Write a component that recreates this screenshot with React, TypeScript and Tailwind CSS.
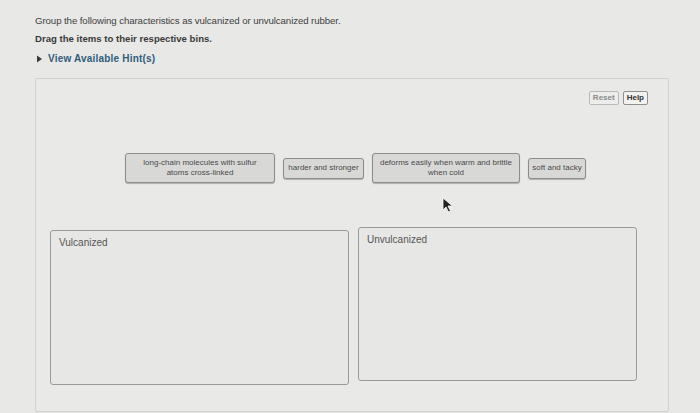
export default function App() {
  const items = [
    { text: "long-chain molecules with sulfur atoms cross-linked", w: "w-[150px]", h: "h-[30px]", px: "px-[12px]" },
    { text: "harder and stronger", w: "w-[81px]", h: "h-[21px]", px: "px-[2px]" },
    { text: "deforms easily when warm and brittle when cold", w: "w-[148px]", h: "h-[30px]", px: "px-[6px]" },
    { text: "soft and tacky", w: "w-[58px]", h: "h-[21px]", px: "px-[2px]" },
  ];

  return (
    <div className="relative w-[700px] h-[413px] overflow-hidden bg-[#e8e8e6] pl-[35px] pt-[15px] font-['Liberation_Sans',Arial,sans-serif] text-[#404040]">
      <p className="text-[9.7px] leading-[12px] tracking-[-0.1px]">
        Group the following characteristics as vulcanized or unvulcanized rubber.
      </p>
      <p className="mt-[6px] text-[9.6px] leading-[12px] font-bold text-[#3a3a3a]">Drag the items to their respective bins.</p>
      <div className="mt-[7px] flex items-center gap-[5px] text-[10px] leading-[13px] font-bold text-[#2f5d7c] tracking-[0.2px]">
        <svg width="7" height="8" viewBox="0 0 7 8" className="ml-[1px]">
          <path d="M1 0.5 L6 4 L1 7.5 Z" fill="#3a3a3a" />
        </svg>
        <span>View Available Hint(s)</span>
      </div>

      <div className="mt-[13px] w-[634px] h-[334px] border border-[#d2d2d0] rounded-[2px] bg-[#e9e9e7] pt-[12px]">
        <div className="flex justify-end gap-[4px] pr-[20px]">
          <button className="h-[14px] px-[3px] border border-[#b9b9b9] rounded-[2px] bg-[#ededeb] text-[8px] leading-[12px] font-bold text-[#8a8a8a]">
            Reset
          </button>
          <button className="h-[14px] px-[3px] border border-[#8f8f8f] rounded-[2px] bg-[#f2f2f0] text-[8px] leading-[12px] font-bold text-[#333]">
            Help
          </button>
        </div>

        <div className="mt-[48px] ml-[89px] flex items-center gap-[8px]">
          {items.map((it, i) => (
            <div
              key={i}
              className={`${it.w} ${it.h} ${it.px} flex items-center justify-center text-center text-[8px] leading-[10px] text-[#4a4a4a] bg-[#d8d8d7] border border-[#8c8c8c] rounded-[3px] shadow-[0_1px_1px_rgba(0,0,0,0.25)]`}
            >
              {it.text}
            </div>
          ))}
        </div>

        <div className="mt-[47px] ml-[14px] flex items-start gap-[9px]">
          <div className="w-[299px] h-[155px] border border-[#9a9a9a] rounded-[3px] bg-[#e7e7e5] px-[8px] pt-[5px] text-[10px] leading-[13px] text-[#555]">
            Vulcanized
          </div>
          <div className="-mt-[3px] w-[279px] h-[154px] border border-[#9a9a9a] rounded-[3px] bg-[#e7e7e5] px-[8px] pt-[5px] text-[10px] leading-[13px] text-[#555]">
            Unvulcanized
          </div>
        </div>
      </div>

      <svg className="absolute left-[442px] top-[197px]" width="12" height="16" viewBox="0 0 12 16">
        <path d="M1 1 L1 13 L4 10 L6.5 15 L8.5 14 L6 9 L10.5 9 Z" fill="#222" stroke="#fff" strokeWidth="0.8" />
      </svg>
    </div>
  );
}
